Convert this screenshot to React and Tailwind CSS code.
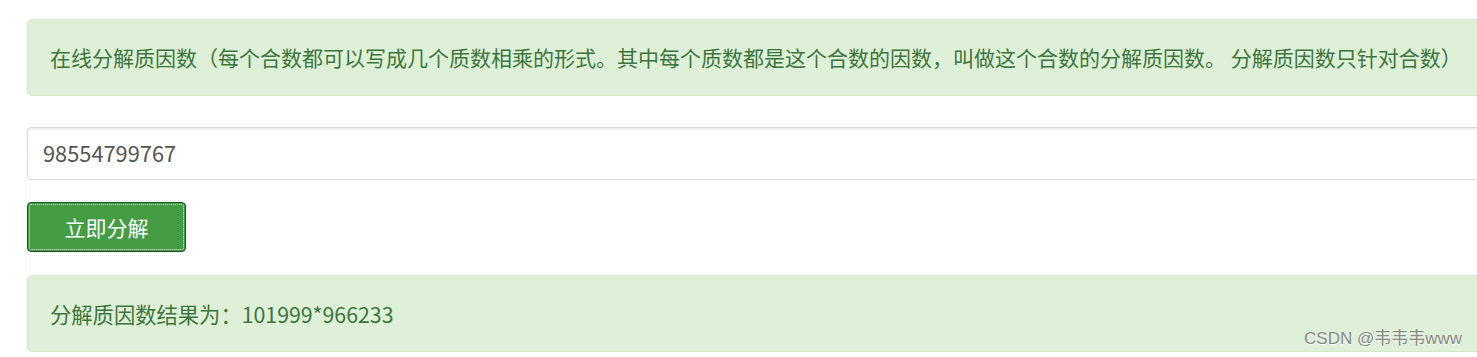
export default function App() {
  const font = { fontFamily: '"Microsoft YaHei", "Noto Sans CJK SC", "Noto Sans", sans-serif' };
  return (
    <div className="w-[1477px] h-[357px] bg-white overflow-hidden relative" style={font}>
      <div className="pl-[27px] pt-[19px] w-[1520px]">
        <div className="h-[77px] bg-[#dff0d8] border border-[#d6e9c6] rounded-[5px] text-[#3c763d] text-[21px] leading-none flex items-center pl-[22px] whitespace-nowrap">
          在线分解质因数（每个合数都可以写成几个质数相乘的形式。其中每个质数都是这个合数的因数，叫做这个合数的分解质因数。 分解质因数只针对合数）
        </div>
        <div className="mt-[31px] h-[53px] border border-[#d9d9d9] rounded-[4px] shadow-[inset_0_2px_2px_rgba(0,0,0,0.06)] flex items-center pl-[15px] text-[#555] text-[21.8px]">
          98554799767
        </div>
        <div className="border-l border-[#f7f7f7] -ml-px">
          <div className="pt-[22px]">
            <button className="w-[159px] h-[50px] bg-[#449d44] border border-[#255625] rounded-[4px] text-white text-[21px] leading-none flex items-center justify-center outline-1 outline-dotted outline-white/80 -outline-offset-[3px]">
              立即分解
            </button>
          </div>
          <div className="mt-[23px] h-[77px] bg-[#dff0d8] border border-[#d6e9c6] rounded-[5px] text-[#3c763d] text-[21.3px] leading-none flex items-center pl-[22px] pt-[1px] whitespace-nowrap">
            分解质因数结果为：101999*966233
          </div>
        </div>
      </div>
      <div className="absolute right-[15px] top-[330px] text-[17px] leading-none text-[#8a8a8a] whitespace-nowrap" style={{ fontFamily: '"Liberation Sans", "Noto Sans CJK SC", sans-serif', textShadow: '0 1px 1px rgba(255,255,255,0.8)' }}>
        CSDN @韦韦韦www
      </div>
    </div>
  );
}
